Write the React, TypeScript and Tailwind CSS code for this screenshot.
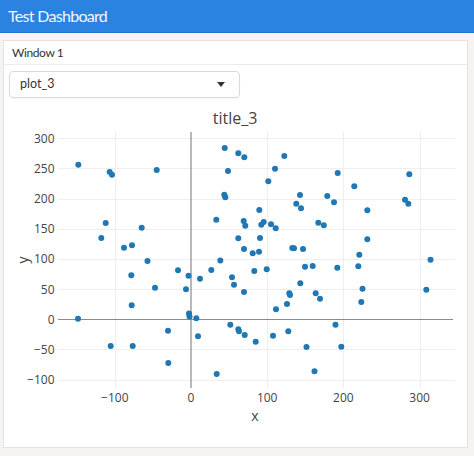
import React from "react";

const PTS: [number, number][] = [
  [78.3, 164.7], [109.7, 172], [112, 174.7], [156.7, 170], [105.7, 223], [101.3, 238], [141.7, 227.7],
  [124, 247.7], [132, 245.3], [147.5, 261], [224.7, 148], [238.3, 153.3], [244.3, 157.3], [284.3, 156],
  [228, 171], [275, 168.7], [268.3, 181.3], [224.3, 194.7], [225.3, 197.3], [300, 195], [296.3, 203.7],
  [301, 208.3], [259.3, 210], [216.3, 219.7], [243.7, 221], [245.3, 225.7], [261.3, 224.7], [263.7, 222],
  [271, 224.3], [275.7, 228.3], [318.3, 222.7], [323.8, 225.3], [238.3, 238.3], [260, 238], [244, 249],
  [252.7, 253.3], [259, 251.7], [292.3, 248], [294, 248.3], [303, 249], [220.3, 260.5], [337.7, 173],
  [409.3, 174.3], [354.3, 186.3], [327.3, 196], [334, 202.3], [405, 199.7], [408.3, 203.7], [367.3, 210.3],
  [367.3, 239.3], [359.3, 254.7], [430.5, 259.7], [131.3, 275.3], [178, 270.3], [188.5, 275.7], [155, 287.7],
  [186, 289.3], [131.7, 305.3], [189, 313.5], [189.5, 316.5], [196.3, 318.3], [78, 318.7], [168, 330.7],
  [110.7, 346], [132.7, 346], [168.3, 363], [211.3, 270], [200, 278.7], [232, 277.3], [234, 284.7],
  [254.3, 271], [266.7, 269.3], [244, 292], [305, 266.7], [312.7, 266], [300.3, 283.3], [289.3, 293.3],
  [290, 295], [315.7, 293.3], [320, 298.7], [287, 304], [276, 309.3], [230.3, 324.7], [238.3, 329.3],
  [239, 331.3], [244.7, 335], [198, 336.3], [255.7, 341.7], [273, 335.7], [288.3, 331.3], [306.5, 347],
  [216.7, 374], [314.5, 371.3], [337.3, 267.7], [358.3, 266.3], [362.5, 288.7], [426.3, 289.7], [361.3, 302],
  [335.5, 324.7], [341.3, 346.7],
];

const Y0 = 319.3;
const YS = 0.6037;
const X0 = 191;
const XS = 0.762;
const yTicks = [300, 250, 200, 150, 100, 50, 0, -50, -100];
const xTicks = [-100, 0, 100, 200, 300];
const fmt = (v: number) => (v < 0 ? "\u2212" + Math.abs(v) : String(v));

const PL = 58;
const PR = 455;
const PT = 132;
const PB = 388;

function Plot() {
  return (
    <svg width={463} height={348} viewBox="4 99 463 348" className="block">
      <g style={{ fontFamily: '"Open Sans", verdana, arial, sans-serif' }}>
        <text x={235} y={118} fontSize={16} fill="#444" textAnchor="middle" dominantBaseline="central">
          title_3
        </text>
        {yTicks.filter((v) => v !== 0).map((v) => {
          const y = Math.round(Y0 - v * YS) + 0.5;
          return <line key={"gy" + v} x1={PL} x2={PR} y1={y} y2={y} stroke="#eee" strokeWidth={1} />;
        })}
        {xTicks.filter((v) => v !== 0).map((v) => {
          const x = Math.round(X0 + v * XS) + 0.5;
          return <line key={"gx" + v} x1={x} x2={x} y1={PT} y2={PB} stroke="#eee" strokeWidth={1} />;
        })}
        <line x1={PL} x2={PR - 2} y1={319.5} y2={319.5} stroke="#8a8a8a" strokeWidth={1.2} />
        <line x1={191} x2={191} y1={PT} y2={PB} stroke="#8a8a8a" strokeWidth={1.2} />
        {yTicks.map((v) => (
          <text key={"ty" + v} x={54.5} y={Y0 - v * YS} fontSize={12} fill="#444" textAnchor="end" dominantBaseline="central">
            {fmt(v)}
          </text>
        ))}
        {xTicks.map((v) => (
          <text key={"tx" + v} x={X0 + v * XS} y={397} fontSize={12} fill="#444" textAnchor="middle" dominantBaseline="central">
            {fmt(v)}
          </text>
        ))}
        <text x={255} y={415} fontSize={14} fill="#444" textAnchor="middle" dominantBaseline="central">
          x
        </text>
        <text x={22} y={260} fontSize={14} fill="#444" textAnchor="middle" dominantBaseline="central" transform="rotate(-90 22 260)">
          y
        </text>
        {PTS.map(([x, y], i) => (
          <circle key={i} cx={x} cy={y} r={3} fill="#1f77b4" />
        ))}
      </g>
    </svg>
  );
}

export default function App() {
  return (
    <div
      className="w-[474px] h-[456px] overflow-hidden bg-[#f4f4f4] flex flex-col"
      style={{ fontFamily: '"Source Sans Pro", Lato, "Open Sans", sans-serif' }}
    >
      <div className="h-[33px] shrink-0 bg-[#2a83e0] border-b border-[#2272c8] flex items-center pl-[8px]">
        <span className="text-[16px] text-[#f3f7fd] tracking-[-0.7px]">Test Dashboard</span>
      </div>
      <div className="flex-1 pl-[3px] pr-[6px] pt-[7px] pb-[8px] bg-[#f5f4f3]">
        <div className="bg-white border border-[#e3e3e3] flex flex-col">
          <div className="h-[24px] border-b border-[#ececec] flex items-center pl-[8px] text-[12px] text-[#333] tracking-[-0.4px]">
            Window 1
          </div>
          <div className="pt-[6px] px-[5px]">
            <div className="w-[231px] h-[27px] border border-[#d9d9d9] rounded-[4px] flex items-center justify-between pl-[10px] pr-[14px] text-[12.5px] text-[#333] shadow-[0_1px_1px_rgba(0,0,0,0.04)]">
              <span>plot_3</span>
              <span className="w-0 h-0 border-l-[4px] border-r-[4px] border-t-[5px] border-l-transparent border-r-transparent border-t-[#333]" />
            </div>
          </div>
          <div className="mt-[1px]">
            <Plot />
          </div>
        </div>
      </div>
    </div>
  );
}
